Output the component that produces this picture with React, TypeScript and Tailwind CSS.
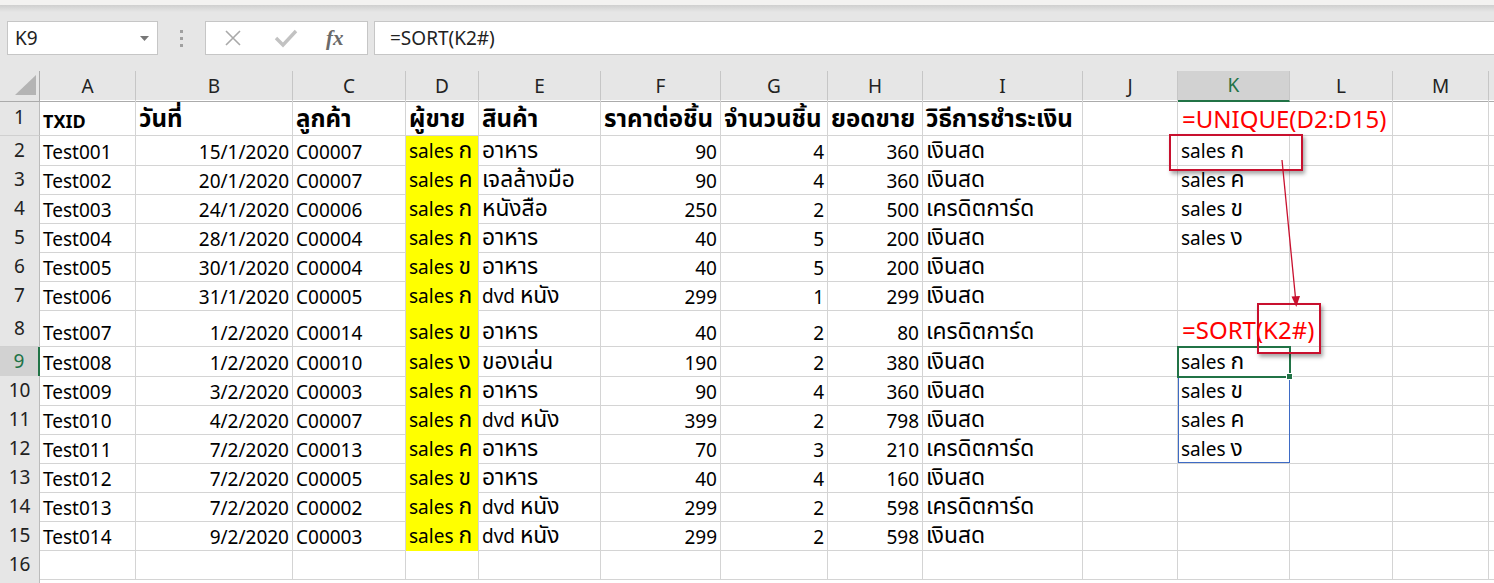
const GRID =
  "grid grid-cols-[40px_96px_157px_113px_73px_122px_120px_107px_95px_160px_95px_112px_103px_96px_1fr]";

const letters = ["A", "B", "C", "D", "E", "F", "G", "H", "I", "J", "K", "L", "M"];

type Row = string[];

const header: Row = [
  "TXID",
  "วันที่",
  "ลูกค้า",
  "ผู้ขาย",
  "สินค้า",
  "ราคาต่อชิ้น",
  "จำนวนชิ้น",
  "ยอดขาย",
  "วิธีการชำระเงิน",
];

const data: Row[] = [
  ["Test001", "15/1/2020", "C00007", "sales ก", "อาหาร", "90", "4", "360", "เงินสด"],
  ["Test002", "20/1/2020", "C00007", "sales ค", "เจลล้างมือ", "90", "4", "360", "เงินสด"],
  ["Test003", "24/1/2020", "C00006", "sales ก", "หนังสือ", "250", "2", "500", "เครดิตการ์ด"],
  ["Test004", "28/1/2020", "C00004", "sales ก", "อาหาร", "40", "5", "200", "เงินสด"],
  ["Test005", "30/1/2020", "C00004", "sales ข", "อาหาร", "40", "5", "200", "เงินสด"],
  ["Test006", "31/1/2020", "C00005", "sales ก", "dvd หนัง", "299", "1", "299", "เงินสด"],
  ["Test007", "1/2/2020", "C00014", "sales ข", "อาหาร", "40", "2", "80", "เครดิตการ์ด"],
  ["Test008", "1/2/2020", "C00010", "sales ง", "ของเล่น", "190", "2", "380", "เงินสด"],
  ["Test009", "3/2/2020", "C00003", "sales ก", "อาหาร", "90", "4", "360", "เงินสด"],
  ["Test010", "4/2/2020", "C00007", "sales ก", "dvd หนัง", "399", "2", "798", "เงินสด"],
  ["Test011", "7/2/2020", "C00013", "sales ค", "อาหาร", "70", "3", "210", "เครดิตการ์ด"],
  ["Test012", "7/2/2020", "C00005", "sales ข", "อาหาร", "40", "4", "160", "เงินสด"],
  ["Test013", "7/2/2020", "C00002", "sales ก", "dvd หนัง", "299", "2", "598", "เครดิตการ์ด"],
  ["Test014", "9/2/2020", "C00003", "sales ก", "dvd หนัง", "299", "2", "598", "เงินสด"],
];

// column K contents by row number
const colK: Record<number, string> = {
  2: "sales ก",
  3: "sales ค",
  4: "sales ข",
  5: "sales ง",
  9: "sales ก",
  10: "sales ข",
  11: "sales ค",
  12: "sales ง",
};

const rightAligned = [1, 5, 6, 7];

function rowHeight(n: number) {
  if (n === 1) return "h-[36px]";
  if (n === 8) return "h-[37px]";
  return "h-[29px]";
}

// the fallback Thai font runs small next to Noto Sans, so Thai runs get scaled up
function ThaiText({ text, bold }: { text: string; bold?: boolean }) {
  const parts = text.split(/([\u0E00-\u0E7F]+)/).filter((p) => p !== "");
  return (
    <>
      {parts.map((p, i) =>
        /[\u0E00-\u0E7F]/.test(p) ? (
          <span key={i} className={bold ? "text-[1.34em]" : "text-[1.2em]"}>
            {p}
          </span>
        ) : (
          <span key={i}>{p}</span>
        )
      )}
    </>
  );
}

function FormulaBar() {
  return (
    <div className="h-[71px] bg-[#e6e6e6] flex flex-col">
      <div className="h-[5px] bg-[#f3f2f1]" />
      <div className="h-[7px] bg-gradient-to-b from-[#cfcfcf] to-[#e6e6e6]" />
      <div className="flex items-center h-[34px] mt-[9px]">
        <div className="ml-[7px] w-[151px] h-[34px] bg-white border border-[#c6c6c6] flex items-center justify-between pl-[7px] pr-[8px]">
          <span className="text-[19px] text-[#222]">K9</span>
          <svg width="9" height="5" viewBox="0 0 9 5">
            <path d="M0 0 L9 0 L4.5 5 Z" fill="#777" />
          </svg>
        </div>
        <div className="w-[47px] flex flex-col items-center gap-[4px]">
          <span className="w-[3px] h-[3px] bg-[#a0a0a0]" />
          <span className="w-[3px] h-[3px] bg-[#a0a0a0]" />
          <span className="w-[3px] h-[3px] bg-[#a0a0a0]" />
        </div>
        <div className="w-[163px] h-[34px] bg-white border border-[#c6c6c6] flex items-center">
          <svg width="18" height="18" viewBox="0 0 18 18" className="ml-[18px]">
            <path d="M2 2 L16 16 M16 2 L2 16" stroke="#a9a9a9" strokeWidth="1.6" />
          </svg>
          <svg width="24" height="20" viewBox="0 0 24 20" className="ml-[32px]">
            <path d="M2 10 L9 17 L22 3" stroke="#c2c2c2" strokeWidth="3.4" fill="none" />
          </svg>
          <span className="ml-[28px] text-[21px] italic font-['Liberation_Serif',serif] text-[#6a6a6a] font-bold leading-none">
            fx
          </span>
        </div>
        <div className="ml-[6px] flex-1 h-[34px] bg-white border border-[#c6c6c6] border-r-0 flex items-center pl-[15px]">
          <span className="text-[19px] text-[#222]">=SORT(K2#)</span>
        </div>
      </div>
    </div>
  );
}

function ColumnHeaders() {
  return (
    <div className={`${GRID} h-[29px] bg-[#e6e6e6]`}>
      <div className="relative border-r border-b border-[#ababab]">
        <svg width="40" height="28" viewBox="0 0 40 28" className="absolute left-0 top-0">
          <path d="M36 4 L36 24 L15 24 Z" fill="#b4b4b4" />
        </svg>
      </div>
      {letters.map((l) =>
        l === "K" ? (
          <div
            key={l}
            className="flex items-center justify-center bg-[#d2d2d2] border-r border-[#c6c6c6] border-b-2 border-b-[#217346] text-[19px] text-[#217346]"
          >
            {l}
          </div>
        ) : (
          <div
            key={l}
            className="flex items-center justify-center border-r border-[#c6c6c6] border-b border-b-[#ababab] text-[19px] text-[#222]"
          >
            {l}
          </div>
        )
      )}
      <div className="border-b border-[#ababab]" />
    </div>
  );
}

function Cell({
  text,
  right,
  bold,
  yellow,
  red,
  noRight,
}: {
  text?: string;
  right?: boolean;
  bold?: boolean;
  yellow?: boolean;
  red?: boolean;
  noRight?: boolean;
}) {
  return (
    <div
      className={[
        "flex items-end whitespace-nowrap overflow-visible px-[3px] border-b border-r",
        right ? "justify-end" : "justify-start",
        yellow ? "bg-[#ffff00] border-b-[#ffff00] border-r-[#d4d4d4]" : "border-[#d4d4d4]",
        noRight ? "border-r-transparent" : "",
        red
          ? "text-[24px] text-[#ff0000] pb-[4px] pl-[4px]"
          : bold
          ? "text-[18px] font-bold text-black pb-[5px]"
          : "text-[19px] text-black pb-[3px]",
      ].join(" ")}
    >
      <span className="leading-none relative z-10">
        {text ? <ThaiText text={text} bold={bold} /> : null}
      </span>
    </div>
  );
}

function SheetRow({ n }: { n: number }) {
  const values = n === 1 ? header : data[n - 2] ?? [];
  const active = n === 9;
  return (
    <div className={`${GRID} ${rowHeight(n)}`}>
      {active ? (
        <div className="flex items-center justify-center bg-[#d2d2d2] border-r-2 border-r-[#217346] border-b border-b-[#d0d0d0] text-[19px] text-[#217346]">
          {n}
        </div>
      ) : (
        <div className="flex items-center justify-center bg-[#e6e6e6] border-r border-r-[#bcbcbc] border-b border-b-[#d0d0d0] text-[19px] text-[#222]">
          {n}
        </div>
      )}
      {Array.from({ length: 9 }).map((_, i) => (
        <Cell
          key={i}
          text={values[i]}
          bold={n === 1}
          right={n > 1 && rightAligned.includes(i)}
          yellow={i === 3 && n >= 2 && n <= 15}
        />
      ))}
      <Cell />
      {n === 1 ? (
        <Cell text="=UNIQUE(D2:D15)" red noRight />
      ) : n === 8 ? (
        <Cell text="=SORT(K2#)" red noRight />
      ) : (
        <Cell text={colK[n]} />
      )}
      <Cell />
      <Cell />
      <div className="border-b border-[#d4d4d4]" />
    </div>
  );
}

export default function App() {
  const rows = Array.from({ length: 16 }, (_, i) => i + 1);
  return (
    <div className="relative w-[1494px] h-[583px] overflow-hidden bg-white font-['Noto_Sans','Noto_Sans_Thai','Tahoma','Loma','Garuda',sans-serif]">
      <FormulaBar />
      <ColumnHeaders />
      {rows.map((n) => (
        <SheetRow key={n} n={n} />
      ))}
      {/* top sliver of row 17 */}
      <div className={`${GRID} h-[29px]`}>
        <div className="bg-[#e6e6e6] border-r border-r-[#bcbcbc]" />
      </div>

      {/* spill range K9:K12 */}
      <div className="absolute left-[1178px] top-[347px] w-[112px] h-[116px] border border-[#3e6bc5] pointer-events-none" />
      {/* active cell K9 */}
      <div className="absolute left-[1177px] top-[346px] w-[114px] h-[32px] border-2 border-[#217346] pointer-events-none" />
      <div className="absolute left-[1286px] top-[373px] w-[7px] h-[7px] bg-[#217346] border border-white pointer-events-none" />

      {/* annotations */}
      <div className="absolute left-[1169px] top-[134px] w-[134px] h-[37px] border-[2px] border-[#c8102e] shadow-[2px_3px_4px_rgba(0,0,0,0.35)] pointer-events-none" />
      <div className="absolute left-[1257px] top-[303px] w-[64px] h-[51px] border-[2px] border-[#c8102e] shadow-[2px_3px_4px_rgba(0,0,0,0.35)] pointer-events-none" />
      <svg
        className="absolute left-0 top-0 pointer-events-none"
        width="1494"
        height="583"
        viewBox="0 0 1494 583"
      >
        <path d="M1282 160 L1295.5 298" stroke="#c8102e" strokeWidth="1.3" fill="none" />
        <path d="M1291.5 296.5 L1300 296 L1296.3 307 Z" fill="#c8102e" />
      </svg>
    </div>
  );
}
